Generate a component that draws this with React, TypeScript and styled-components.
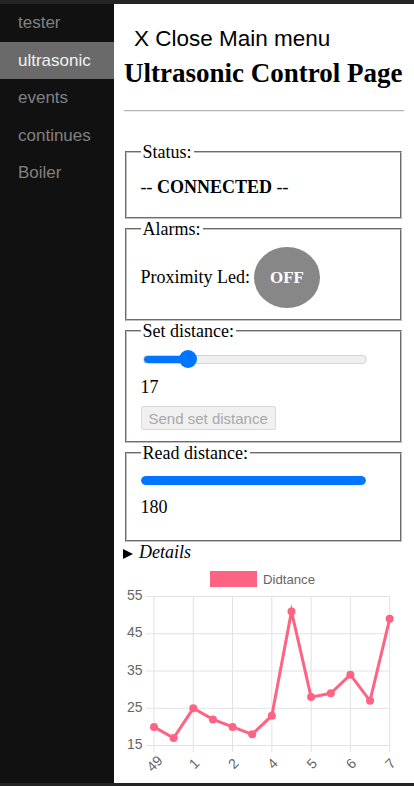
import styled, { createGlobalStyle } from "styled-components";

const GlobalStyle = createGlobalStyle`
  html, body {
    margin: 0;
    height: 100%;
    background: #242424;
  }
  #root {
    height: 100%;
  }
`;

const Page = styled.div`
  height: 100vh;
  box-sizing: border-box;
  padding: 4px 0 3px;
  display: flex;
`;

const Sidebar = styled.nav`
  width: 114px;
  flex-shrink: 0;
  background: #111111;
  display: flex;
  flex-direction: column;
`;

const NavItem = styled.a<{ $active?: boolean }>`
  display: block;
  padding: 6px 18px;
  font-family: "Liberation Sans", Arial, sans-serif;
  font-size: 17px;
  line-height: 25.5px;
  color: ${(p) => (p.$active ? "#f1f1f1" : "#818181")};
  background: ${(p) => (p.$active ? "#6a6a6a" : "transparent")};
  text-decoration: none;
  white-space: nowrap;
`;

const Main = styled.main`
  flex: 1;
  min-width: 0;
  background: #ffffff;
  padding: 0 10px;
  overflow: hidden;
  font-family: "Liberation Serif", "Times New Roman", serif;
  font-size: 18px;
  color: #000;
`;

const CloseButton = styled.button`
  display: block;
  margin: 22px 0 0;
  padding: 0 10px;
  border: none;
  background: none;
  font-family: "Liberation Sans", Arial, sans-serif;
  font-size: 22.5px;
  line-height: 26px;
  color: #000;
  cursor: pointer;
`;

const Title = styled.h1`
  margin: 6px 0 0;
  font-size: 27px;
  line-height: 31px;
  font-weight: bold;
  white-space: nowrap;
`;

const Rule = styled.hr`
  margin: 21px 0 30px;
  height: 0;
  border: none;
  border-top: 1px solid #b4b4b4;
  border-bottom: 1px solid #ececec;
`;

const Box = styled.fieldset`
  margin: 0 2px 0 1px;
  padding: 6px 13.5px 11px;
  border: 2px groove #c0c0c0;
`;

const Legend = styled.legend`
  padding: 0 2px;
  line-height: 20px;
`;

const Line = styled.div<{ $mt?: number; $mb?: number }>`
  line-height: 21px;
  margin: ${(p) => p.$mt ?? 0}px 0 ${(p) => p.$mb ?? 0}px;
`;

const AlarmRow = styled.div`
  display: flex;
  align-items: center;
  gap: 4px;
  margin-top: 2px;
`;

const Led = styled.button<{ $on?: boolean }>`
  width: 66px;
  height: 61px;
  border: none;
  border-radius: 50%;
  background: ${(p) => (p.$on ? "#2e9e44" : "#878787")};
  color: #fff;
  font-family: "Liberation Serif", "Times New Roman", serif;
  font-size: 17px;
  font-weight: bold;
  padding: 0;
`;

const Range = styled.input<{ $fill: number }>`
  -webkit-appearance: none;
  appearance: none;
  display: block;
  width: 224px;
  height: 18px;
  margin: 3px 0 0 2.5px;
  background: transparent;

  &::-webkit-slider-runnable-track {
    height: 9px;
    border-radius: 5px;
    box-sizing: border-box;
    border: 1px solid #d4d4d4;
    background: linear-gradient(
      to right,
      #0075ff 0,
      #0075ff ${(p) => p.$fill}%,
      #efefef ${(p) => p.$fill}%,
      #efefef 100%
    );
  }

  &::-webkit-slider-thumb {
    -webkit-appearance: none;
    width: 18px;
    height: 18px;
    margin-top: -5.5px;
    border-radius: 50%;
    background: #0075ff;
    border: none;
  }
`;

const SendButton = styled.button`
  display: block;
  height: 24px;
  padding: 0 7px;
  font-family: "Liberation Sans", Arial, sans-serif;
  font-size: 15px;
  color: #a8a8a8;
  background: #f0f0f0;
  border: 1px solid #d9d9d9;
  border-radius: 2px;
`;

const Meter = styled.div`
  width: 225px;
  height: 9px;
  margin: 7px 0 0 0.5px;
  border-radius: 5px;
  background: #efefef;
  overflow: hidden;
`;

const MeterFill = styled.div`
  height: 100%;
  background: #0075ff;
  border-radius: 5px;
`;

const Details = styled.details`
  line-height: 21px;
`;

const Summary = styled.summary`
  list-style: none;
  font-style: italic;
  cursor: pointer;

  &::-webkit-details-marker {
    display: none;
  }

  &::before {
    content: "";
    display: inline-block;
    width: 0;
    height: 0;
    margin: 0 6px 0 -1px;
    border-left: 10px solid #000;
    border-top: 5.5px solid transparent;
    border-bottom: 5.5px solid transparent;
    vertical-align: -1px;
  }
`;

const ChartSvg = styled.svg`
  display: block;
  font-family: "Liberation Sans", Arial, sans-serif;
`;

const values = [20, 17, 25, 22, 20, 18, 23, 51, 28, 29, 34, 27, 49];
const labels: Record<number, string> = { 0: "49", 2: "1", 4: "2", 6: "4", 8: "5", 10: "6", 12: "7" };

const X0 = 30;
const STEP = 19.64;
const yOf = (v: number) => 182.5 - (v - 15) * 3.725;
const xOf = (i: number) => X0 + i * STEP;

const DistanceChart = () => {
  const right = xOf(values.length - 1);
  const path = values.map((v, i) => `${i ? "L" : "M"}${xOf(i).toFixed(1)} ${yOf(v).toFixed(1)}`).join(" ");
  return (
    <ChartSvg width={290} height={222} viewBox="0 0 290 222">
      <rect x={86} y={8} width={47} height={16} fill="#ff6384" />
      <text x={139} y={20.5} fontSize={13.2} fill="#666">
        Didtance
      </text>
      {[55, 45, 35, 25, 15].map((v) => (
        <g key={v}>
          <line x1={22} x2={right} y1={yOf(v)} y2={yOf(v)} stroke="#e2e2e2" strokeWidth={1} />
          <text x={18.5} y={yOf(v)} fontSize={14} fill="#666" textAnchor="end" dominantBaseline="middle">
            {v}
          </text>
        </g>
      ))}
      {values.map((_, i) =>
        labels[i] !== undefined ? (
          <g key={i}>
            <line x1={xOf(i)} x2={xOf(i)} y1={33.5} y2={189} stroke="#e2e2e2" strokeWidth={1} />
            <text
              fontSize={14}
              fill="#666"
              textAnchor="middle"
              dominantBaseline="middle"
              transform={`translate(${xOf(i) + 1.5} 201.5) rotate(-45)`}
            >
              {labels[i]}
            </text>
          </g>
        ) : null
      )}
      <path d={path} fill="none" stroke="#ff6384" strokeWidth={3} strokeLinejoin="miter" strokeMiterlimit={10} />
      {values.map((v, i) => (
        <circle key={i} cx={xOf(i)} cy={yOf(v)} r={4} fill="#ff6384" />
      ))}
    </ChartSvg>
  );
};

const App = () => {
  const setDistance = 17;
  const readDistance = 180;

  return (
    <>
      <GlobalStyle />
      <Page>
        <Sidebar>
          <NavItem href="#">tester</NavItem>
          <NavItem href="#" $active>
            ultrasonic
          </NavItem>
          <NavItem href="#">events</NavItem>
          <NavItem href="#">continues</NavItem>
          <NavItem href="#">Boiler</NavItem>
        </Sidebar>
        <Main>
          <CloseButton>X Close Main menu</CloseButton>
          <Title>Ultrasonic Control Page</Title>
          <Rule />

          <Box>
            <Legend>Status:</Legend>
            <Line $mt={9} $mb={8}>
              -- <b>CONNECTED</b> --
            </Line>
          </Box>

          <Box>
            <Legend>Alarms:</Legend>
            <AlarmRow>
              <span>Proximity Led:</span>
              <Led>OFF</Led>
            </AlarmRow>
          </Box>

          <Box>
            <Legend>Set distance:</Legend>
            <Range type="range" min={0} max={100} defaultValue={setDistance} $fill={setDistance} readOnly />
            <Line $mt={9} $mb={8}>
              {setDistance}
            </Line>
            <SendButton disabled>Send set distance</SendButton>
          </Box>

          <Box>
            <Legend>Read distance:</Legend>
            <Meter>
              <MeterFill style={{ width: `${Math.min(100, (readDistance / 180) * 100)}%` }} />
            </Meter>
            <Line $mt={12} $mb={11}>
              {readDistance}
            </Line>
          </Box>

          <Details>
            <Summary>Details</Summary>
          </Details>

          <DistanceChart />
        </Main>
      </Page>
    </>
  );
};

export default App;
